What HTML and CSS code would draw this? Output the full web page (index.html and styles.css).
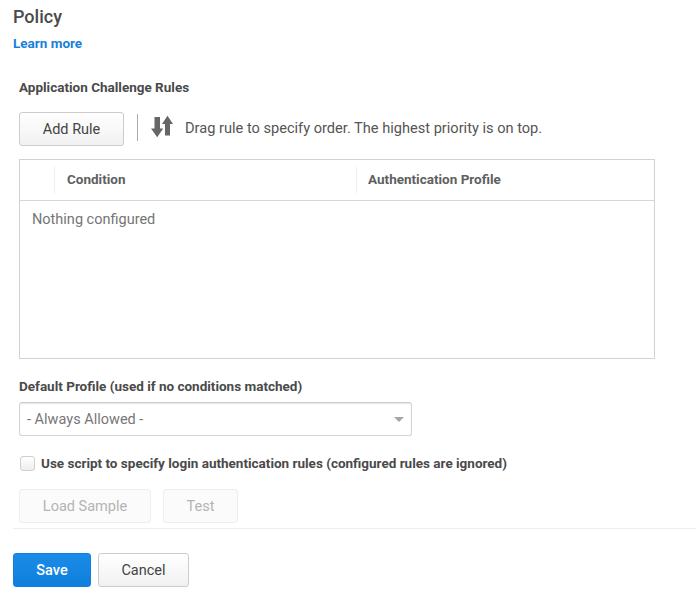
FILE: index.html
```html
<!DOCTYPE html>
<html lang="en">
<head>
    <meta charset="UTF-8">
    <title>Policy</title>
    <link rel="stylesheet" href="styles.css">
</head>
<body>
    <div class="page">
        <h1 class="title">Policy</h1>
        <a class="learn-more" href="#">Learn more</a>

        <div class="section">
            <div class="section-label">Application Challenge Rules</div>

            <div class="toolbar">
                <button class="btn btn-add">Add Rule</button>
                <span class="toolbar-sep"></span>
                <svg class="sort-icon" width="24" height="24" viewBox="0 0 24 24">
                    <path d="M4.5 2h5.5v11.5h3.2l-6 8.8-6.2-8.8h3.5z" fill="#666"/>
                    <path d="M17.5 0.7l5.5 8.3h-3v11.5h-5v-11.5h-3z" fill="#666"/>
                </svg>
                <span class="toolbar-hint">Drag rule to specify order. The highest priority is on top.</span>
            </div>

            <div class="rules-table">
                <div class="rules-head">
                    <div class="col col-drag"></div>
                    <div class="col col-condition">Condition</div>
                    <div class="col col-profile">Authentication Profile</div>
                </div>
                <div class="rules-empty">Nothing configured</div>
            </div>

            <div class="field-label">Default Profile (used if no conditions matched)</div>
            <div class="select">
                <span>- Always Allowed -</span>
                <span class="select-arrow"></span>
            </div>

            <label class="check-row">
                <span class="checkbox"></span>
                <span>Use script to specify login authentication rules (configured rules are ignored)</span>
            </label>

            <div class="script-actions">
                <button class="btn btn-load" disabled>Load Sample</button>
                <button class="btn btn-test" disabled>Test</button>
            </div>
        </div>

        <div class="form-actions">
            <button class="btn btn-save">Save</button>
            <button class="btn btn-cancel">Cancel</button>
        </div>
    </div>
</body>
</html>
```

FILE: styles.css
```css
* {
    box-sizing: border-box;
}
body {
    margin: 0;
    background: #fff;
    color: #555;
    font-family: Roboto, "Liberation Sans", sans-serif;
    font-size: 14.5px;
}
.page {
    padding: 7px 0 0 13px;
    height: 600px;
    overflow: hidden;
}
.title {
    margin: 0;
    font-size: 18px;
    font-weight: 500;
    line-height: 20px;
    color: #4a4a4a;
}
.learn-more {
    display: block;
    margin-top: 7px;
    font-size: 13.5px;
    font-weight: 700;
    line-height: 18px;
    color: #1a7fdc;
    text-decoration: none;
}
.section {
    padding-left: 6px;
    margin-top: 26px;
    border-bottom: 1px solid #eee;
    padding-bottom: 5px;
}
.section-label {
    font-size: 13.5px;
    font-weight: 700;
    line-height: 18px;
    color: #4a4a4a;
}
.toolbar {
    display: flex;
    align-items: center;
    margin-top: 16px;
    height: 34px;
}
.btn {
    height: 34px;
    padding: 0;
    border: 1px solid #ccc;
    border-radius: 3px;
    background: linear-gradient(#fff, #f1f1f1);
    color: #444;
    font-family: inherit;
    font-size: 14.5px;
}
.btn-add {
    width: 105px;
}
.toolbar-sep {
    width: 1px;
    height: 27px;
    margin-top: -4px;
    margin-left: 13px;
    background: #aaa;
}
.sort-icon {
    margin-left: 12px;
    margin-top: -4px;
}
.toolbar-hint {
    margin-left: 11px;
    margin-top: -2px;
    font-size: 14.6px;
    color: #555;
}
.rules-table {
    width: 636px;
    height: 200px;
    margin-top: 13px;
    border: 1px solid #d2d2d2;
}
.rules-head {
    display: flex;
    align-items: center;
    height: 41px;
    border-bottom: 1px solid #d6d6d6;
}
.col {
    height: 26px;
    line-height: 24px;
    padding-left: 12px;
    font-size: 13.5px;
    font-weight: 700;
    color: #5f5f5f;
}
.col-drag {
    width: 34px;
    padding: 0;
}
.col-condition {
    width: 302px;
    border-left: 1px solid #eee;
}
.col-profile {
    border-left: 1px solid #eee;
    padding-left: 11px;
}
.rules-empty {
    padding: 11px 12px;
    line-height: 16px;
    color: #757575;
}
.field-label {
    margin-top: 18px;
    font-size: 13.5px;
    font-weight: 700;
    line-height: 18px;
    color: #4a4a4a;
}
.select {
    display: flex;
    align-items: center;
    justify-content: space-between;
    width: 393px;
    height: 34px;
    margin-top: 7px;
    padding: 0 7px 0 7px;
    border: 1px solid #d4d4d4;
    border-top-color: #ccc;
    border-radius: 3px;
    box-shadow: inset 0 1px 1px #e6e6e6;
    color: #777;
}
.select-arrow {
    width: 0;
    height: 0;
    border-left: 5px solid transparent;
    border-right: 5px solid transparent;
    border-top: 5px solid #a6a6a6;
}
.check-row {
    display: flex;
    align-items: center;
    margin-top: 18px;
    height: 18px;
    font-size: 13.5px;
    font-weight: 700;
    color: #4a4a4a;
}
.checkbox {
    width: 15px;
    height: 15px;
    margin: 0 6px 0 1px;
    border: 1px solid #d0d0d0;
    border-radius: 3px;
    background: linear-gradient(#fff, #eee);
}
.script-actions {
    display: flex;
    gap: 12px;
    margin-top: 17px;
}
.btn-load,
.btn-test {
    border-color: #eee;
    background: #fbfbfb;
    color: #b4b4b4;
}
.btn-load {
    width: 132px;
}
.btn-test {
    width: 75px;
}
.form-actions {
    display: flex;
    gap: 7px;
    margin-top: 24px;
}
.btn-save {
    width: 78px;
    border-color: #0f80de;
    background: linear-gradient(#1a8ce8, #0f7fdb);
    color: #fff;
    font-weight: 500;
}
.btn-cancel {
    width: 91px;
}
```
